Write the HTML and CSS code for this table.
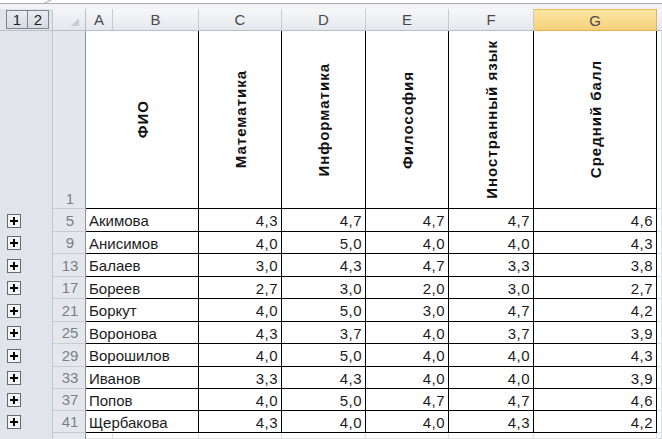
FILE: index.html
```html
<!DOCTYPE html>
<html lang="ru">
<head>
<meta charset="utf-8">
<title>Успеваемость</title>
<link rel="stylesheet" href="styles.css">
</head>
<body>
<div class="topbar"><svg class="tick" width="10" height="4" viewBox="0 0 10 4"><path d="M1 4 L9 0" stroke="#9aa1a9" stroke-width="1" fill="none"/></svg></div>
<div class="grid">
  <!-- column header row -->
  <div class="ol ol-head"><span class="lvl">1</span><span class="lvl">2</span></div>
  <div class="corner"><span class="tri"></span></div>
  <div class="ch">A</div>
  <div class="ch">B</div>
  <div class="ch">C</div>
  <div class="ch">D</div>
  <div class="ch">E</div>
  <div class="ch">F</div>
  <div class="ch sel">G</div>
  <div class="ch more"></div>

  <!-- row 1 -->
  <div class="ol"></div>
  <div class="rh tall">1</div>
  <div class="hd ab"><span class="vt">ФИО</span></div>
  <div class="hd"><span class="vt">Математика</span></div>
  <div class="hd"><span class="vt">Информатика</span></div>
  <div class="hd"><span class="vt">Философия</span></div>
  <div class="hd"><span class="vt">Иностранный язык</span></div>
  <div class="hd"><span class="vt">Средний балл</span></div>
  <div class="gl"></div>

  <div class="ol"><span class="plus"><svg width="8" height="8" viewBox="0 0 8 8"><rect x="3" y="0" width="2" height="8"/><rect x="0" y="3" width="8" height="2"/></svg></span></div>
  <div class="rh">5</div>
  <div class="nm">Акимова</div>
  <div class="nv">4,3</div><div class="nv">4,7</div><div class="nv">4,7</div><div class="nv">4,7</div><div class="nv">4,6</div>
  <div class="gl"></div>

  <div class="ol"><span class="plus"><svg width="8" height="8" viewBox="0 0 8 8"><rect x="3" y="0" width="2" height="8"/><rect x="0" y="3" width="8" height="2"/></svg></span></div>
  <div class="rh">9</div>
  <div class="nm">Анисимов</div>
  <div class="nv">4,0</div><div class="nv">5,0</div><div class="nv">4,0</div><div class="nv">4,0</div><div class="nv">4,3</div>
  <div class="gl"></div>

  <div class="ol"><span class="plus"><svg width="8" height="8" viewBox="0 0 8 8"><rect x="3" y="0" width="2" height="8"/><rect x="0" y="3" width="8" height="2"/></svg></span></div>
  <div class="rh">13</div>
  <div class="nm">Балаев</div>
  <div class="nv">3,0</div><div class="nv">4,3</div><div class="nv">4,7</div><div class="nv">3,3</div><div class="nv">3,8</div>
  <div class="gl"></div>

  <div class="ol"><span class="plus"><svg width="8" height="8" viewBox="0 0 8 8"><rect x="3" y="0" width="2" height="8"/><rect x="0" y="3" width="8" height="2"/></svg></span></div>
  <div class="rh">17</div>
  <div class="nm">Бореев</div>
  <div class="nv">2,7</div><div class="nv">3,0</div><div class="nv">2,0</div><div class="nv">3,0</div><div class="nv">2,7</div>
  <div class="gl"></div>

  <div class="ol"><span class="plus"><svg width="8" height="8" viewBox="0 0 8 8"><rect x="3" y="0" width="2" height="8"/><rect x="0" y="3" width="8" height="2"/></svg></span></div>
  <div class="rh">21</div>
  <div class="nm">Боркут</div>
  <div class="nv">4,0</div><div class="nv">5,0</div><div class="nv">3,0</div><div class="nv">4,7</div><div class="nv">4,2</div>
  <div class="gl"></div>

  <div class="ol"><span class="plus"><svg width="8" height="8" viewBox="0 0 8 8"><rect x="3" y="0" width="2" height="8"/><rect x="0" y="3" width="8" height="2"/></svg></span></div>
  <div class="rh">25</div>
  <div class="nm">Воронова</div>
  <div class="nv">4,3</div><div class="nv">3,7</div><div class="nv">4,0</div><div class="nv">3,7</div><div class="nv">3,9</div>
  <div class="gl"></div>

  <div class="ol"><span class="plus"><svg width="8" height="8" viewBox="0 0 8 8"><rect x="3" y="0" width="2" height="8"/><rect x="0" y="3" width="8" height="2"/></svg></span></div>
  <div class="rh">29</div>
  <div class="nm">Ворошилов</div>
  <div class="nv">4,0</div><div class="nv">5,0</div><div class="nv">4,0</div><div class="nv">4,0</div><div class="nv">4,3</div>
  <div class="gl"></div>

  <div class="ol"><span class="plus"><svg width="8" height="8" viewBox="0 0 8 8"><rect x="3" y="0" width="2" height="8"/><rect x="0" y="3" width="8" height="2"/></svg></span></div>
  <div class="rh">33</div>
  <div class="nm">Иванов</div>
  <div class="nv">3,3</div><div class="nv">4,3</div><div class="nv">4,0</div><div class="nv">4,0</div><div class="nv">3,9</div>
  <div class="gl"></div>

  <div class="ol"><span class="plus"><svg width="8" height="8" viewBox="0 0 8 8"><rect x="3" y="0" width="2" height="8"/><rect x="0" y="3" width="8" height="2"/></svg></span></div>
  <div class="rh">37</div>
  <div class="nm">Попов</div>
  <div class="nv">4,0</div><div class="nv">5,0</div><div class="nv">4,7</div><div class="nv">4,7</div><div class="nv">4,6</div>
  <div class="gl"></div>

  <div class="ol"><span class="plus"><svg width="8" height="8" viewBox="0 0 8 8"><rect x="3" y="0" width="2" height="8"/><rect x="0" y="3" width="8" height="2"/></svg></span></div>
  <div class="rh">41</div>
  <div class="nm">Щербакова</div>
  <div class="nv">4,3</div><div class="nv">4,0</div><div class="nv">4,0</div><div class="nv">4,3</div><div class="nv">4,2</div>
  <div class="gl"></div>

  <!-- partially visible next row -->
  <div class="ol"></div>
  <div class="rh part">45</div>
  <div class="gl"></div>
  <div class="gl"></div>
  <div class="gl"></div>
  <div class="gl"></div>
  <div class="gl"></div>
  <div class="gl"></div>
  <div class="gl"></div>
  <div class="gl"></div>
</div>
</body>
</html>
```

FILE: styles.css
```css
* { box-sizing: border-box; }

html, body {
  margin: 0;
  padding: 0;
}

body {
  width: 662px;
  height: 439px;
  overflow: hidden;
  background: #ffffff;
  font-family: "Liberation Sans", Arial, sans-serif;
  color: #1c1c1c;
}

.topbar {
  height: 9px;
  position: relative;
  background: linear-gradient(#ffffff 0 3px, #a8afb7 3px 4px, #f1f3f5 4px 9px);
}

.tick {
  position: absolute;
  left: 42px;
  top: 0;
}

.grid {
  display: grid;
  grid-template-columns: 53px 33px 27px 86px 83px 84px 83px 85px 123px 1fr;
  grid-template-rows: 22px 178px 23px 22px 23px 22px 23px 22px 23px 22px 22px 22px 1fr;
  height: 430px;
}

/* outline (grouping) column */
.ol {
  background: #e1e5eb;
  border-right: 1px solid #c3c8cf;
  display: flex;
  align-items: center;
  padding-left: 7px;
}

.ol-head {
  border-bottom: 1px solid #b9bfc6;
  padding-left: 6px;
  align-items: stretch;
  padding-top: 1px;
  padding-bottom: 1px;
}

.lvl {
  width: 22px;
  border: 1px solid #7d858e;
  background: linear-gradient(#e9ecf0, #d6dbe1);
  font-size: 15px;
  color: #222;
  display: flex;
  align-items: center;
  justify-content: center;
}

.lvl + .lvl {
  border-left: none;
  width: 21px;
}

.plus {
  width: 14px;
  height: 14px;
  border: 1px solid #666b72;
  background: #f4f5f7;
  display: flex;
  align-items: center;
  justify-content: center;
  fill: #000;
}

/* corner + column headers */
.corner {
  background: linear-gradient(#f3f5f8, #e3e7ec);
  border-right: 1px solid #b9bfc6;
  border-bottom: 1px solid #b9bfc6;
  position: relative;
}

.tri {
  position: absolute;
  right: 6px;
  bottom: 4px;
  width: 0;
  height: 0;
  border-left: 8px solid transparent;
  border-bottom: 8px solid #c9cdd3;
}

.ch {
  background: linear-gradient(#f6f7f9, #e4e8ed);
  border-right: 1px solid #c6cbd1;
  border-bottom: 1px solid #b9bfc6;
  display: flex;
  align-items: center;
  justify-content: center;
  font-size: 15px;
  color: #4a4a4a;
}

.ch.sel {
  background: linear-gradient(#fbe6a1, #f7d07c);
  border-top: 1px solid #efb94f;
  border-bottom: 1px solid #eab04a;
  border-right: 1px solid #d9b46a;
}

.ch.more {
  border-right: none;
}

/* row headers */
.rh {
  background: #e4e8ed;
  border-right: 1px solid #8d949c;
  border-bottom: 1px solid #c7ccd2;
  display: flex;
  align-items: center;
  justify-content: center;
  font-size: 15px;
  color: #7b7f85;
  padding-left: 2px;
  overflow: hidden;
}

.rh.tall {
  align-items: flex-end;
  padding-bottom: 1px;
}

.rh.part {
  align-items: flex-start;
  padding-top: 3px;
  border-bottom: none;
}

/* header cells with rotated captions */
.hd {
  border-right: 1px solid #000;
  border-bottom: 1px solid #000;
  display: flex;
  align-items: center;
  justify-content: center;
  background: #fff;
}

.hd.ab {
  grid-column: span 2;
}

.vt {
  writing-mode: vertical-rl;
  transform: rotate(180deg);
  font-weight: bold;
  font-size: 15px;
  letter-spacing: 1px;
  color: #111;
  white-space: nowrap;
}

/* data cells */
.nm {
  grid-column: span 2;
  border-right: 1px solid #000;
  border-bottom: 1px solid #000;
  display: flex;
  align-items: center;
  padding-left: 3px;
  padding-top: 1px;
  font-size: 15px;
  white-space: nowrap;
}

.nv {
  border-right: 1px solid #000;
  border-bottom: 1px solid #000;
  display: flex;
  align-items: center;
  justify-content: flex-end;
  padding-right: 3px;
  padding-top: 1px;
  font-size: 15px;
  letter-spacing: 0.5px;
}

/* empty gridline cells */
.gl {
  border-right: 1px solid #dfe2e5;
  border-bottom: 1px solid #dfe2e5;
  background: #fff;
}
```
